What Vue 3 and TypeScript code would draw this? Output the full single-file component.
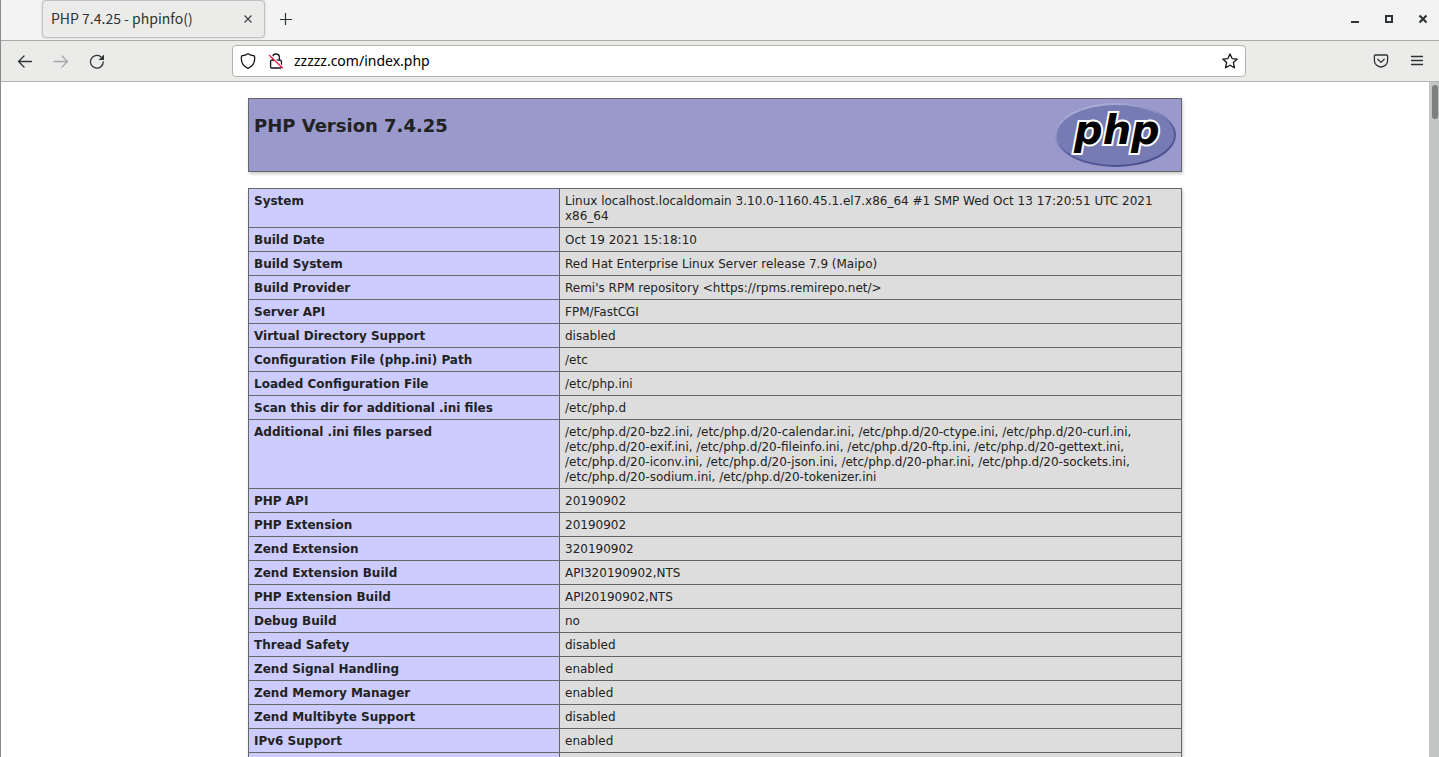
<script setup lang="ts">
import { ref } from 'vue'

interface InfoRow {
  name: string
  value: string
}

const address = ref('zzzzz.com/index.php')

const rows: InfoRow[] = [
  { name: 'System', value: 'Linux localhost.localdomain 3.10.0-1160.45.1.el7.x86_64 #1 SMP Wed Oct 13 17:20:51 UTC 2021 x86_64' },
  { name: 'Build Date', value: 'Oct 19 2021 15:18:10' },
  { name: 'Build System', value: 'Red Hat Enterprise Linux Server release 7.9 (Maipo)' },
  { name: 'Build Provider', value: "Remi's RPM repository <https://rpms.remirepo.net/>" },
  { name: 'Server API', value: 'FPM/FastCGI' },
  { name: 'Virtual Directory Support', value: 'disabled' },
  { name: 'Configuration File (php.ini) Path', value: '/etc' },
  { name: 'Loaded Configuration File', value: '/etc/php.ini' },
  { name: 'Scan this dir for additional .ini files', value: '/etc/php.d' },
  {
    name: 'Additional .ini files parsed',
    value: [
      '/etc/php.d/20-bz2.ini, /etc/php.d/20-calendar.ini, /etc/php.d/20-ctype.ini, /etc/php.d/20-curl.ini,',
      '/etc/php.d/20-exif.ini, /etc/php.d/20-fileinfo.ini, /etc/php.d/20-ftp.ini, /etc/php.d/20-gettext.ini,',
      '/etc/php.d/20-iconv.ini, /etc/php.d/20-json.ini, /etc/php.d/20-phar.ini, /etc/php.d/20-sockets.ini,',
      '/etc/php.d/20-sodium.ini, /etc/php.d/20-tokenizer.ini',
    ].join('\n'),
  },
  { name: 'PHP API', value: '20190902' },
  { name: 'PHP Extension', value: '20190902' },
  { name: 'Zend Extension', value: '320190902' },
  { name: 'Zend Extension Build', value: 'API320190902,NTS' },
  { name: 'PHP Extension Build', value: 'API20190902,NTS' },
  { name: 'Debug Build', value: 'no' },
  { name: 'Thread Safety', value: 'disabled' },
  { name: 'Zend Signal Handling', value: 'enabled' },
  { name: 'Zend Memory Manager', value: 'enabled' },
  { name: 'Zend Multibyte Support', value: 'disabled' },
  { name: 'IPv6 Support', value: 'enabled' },
  { name: '', value: '' },
]
</script>

<template>
  <div class="window">
    <header class="titlebar">
      <div class="tab">
        <span class="tab-title">PHP 7.4.25 - phpinfo()</span>
        <button class="icon-button tab-close" aria-label="Close tab">
          <svg width="10" height="10" viewBox="0 0 10 10"><path d="M1.5 1.5l7 7M8.5 1.5l-7 7" stroke="#3a4042" stroke-width="1.1" fill="none" /></svg>
        </button>
      </div>
      <button class="icon-button new-tab" aria-label="New tab">
        <svg width="12" height="12" viewBox="0 0 12 12"><path d="M5.500 0v12M0 6.500h12" stroke="#2e3436" stroke-width="1.2" fill="none" /></svg>
      </button>
      <div class="window-controls">
        <button class="icon-button" aria-label="Minimize">
          <svg width="10" height="10" viewBox="0 0 10 10"><path d="M1 7h8v2H1z" fill="#2e3436" /></svg>
        </button>
        <button class="icon-button" aria-label="Maximize">
          <svg width="10" height="10" viewBox="0 0 10 10"><path d="M2 2h6v6H2z" fill="none" stroke="#2e3436" stroke-width="2" /></svg>
        </button>
        <button class="icon-button" aria-label="Close window">
          <svg width="10" height="10" viewBox="0 0 10 10"><path d="M1.5 1.5l7 7M8.5 1.5l-7 7" stroke="#2e3436" stroke-width="2.2" fill="none" /></svg>
        </button>
      </div>
    </header>

    <nav class="toolbar">
      <div class="nav-buttons">
        <button class="icon-button" aria-label="Back">
          <svg width="16" height="16" viewBox="0 0 16 16"><path d="M14.500 8.500H1.500M7 3L1.500 8.500L7 14" fill="none" stroke="#2e3436" stroke-width="1.3" stroke-linecap="round" stroke-linejoin="round" /></svg>
        </button>
        <button class="icon-button" aria-label="Forward" disabled>
          <svg width="16" height="16" viewBox="0 0 16 16"><path d="M1 8.500h13.5M9 3L14.500 8.500L9 14" fill="none" stroke="#a3a6a6" stroke-width="1.3" stroke-linecap="round" stroke-linejoin="round" /></svg>
        </button>
        <button class="icon-button" aria-label="Reload">
          <svg width="16" height="16" viewBox="0 0 16 16">
            <path d="M14.300 9A6.400 6.400 0 1 1 11.800 3.700" fill="none" stroke="#2e3436" stroke-width="1.300" stroke-linecap="round" />
            <path d="M15 1.500v5.500H9.500z" fill="#2e3436" />
          </svg>
        </button>
      </div>
      <div class="url-bar">
        <svg class="shield" width="16" height="16" viewBox="0 0 16 16"><path d="M8 .8C6.300 2 4 2.700 1.600 2.900C.6 8.500 2.600 13 8 15.300C13.400 13 15.400 8.500 14.400 2.900C12 2.700 9.700 2 8 .8z" fill="none" stroke="#15141a" stroke-width="1.300" stroke-linejoin="round" /></svg>
        <svg class="lock" width="16" height="16" viewBox="0 0 16 16">
          <path d="M4.600 7.200V4.400a3.400 3.400 0 0 1 6.800 0v2.800" fill="none" stroke="#15141a" stroke-width="1.300" />
          <rect x="2.600" y="7.200" width="10.800" height="7.800" rx="1" fill="none" stroke="#15141a" stroke-width="1.300" />
          <path d="M2 1.200l13.300 13.300" stroke="#fff" stroke-width="1.500" />
          <path d="M1 2l13.800 13.200" stroke="#f0224e" stroke-width="1.300" />
        </svg>
        <input v-model="address" class="url-input" type="text" aria-label="Address" spellcheck="false" />
        <button class="icon-button" aria-label="Bookmark this page">
          <svg width="16" height="16" viewBox="0 0 16 16"><path d="M8 .9l2.100 4.700 5.100.500-3.800 3.500 1.100 5.200L8 12.200l-4.500 2.600 1.100-5.200L.8 6.100l5.100-.500z" fill="none" stroke="#15141a" stroke-width="1.300" stroke-linejoin="round" /></svg>
        </button>
      </div>
      <div class="tool-buttons">
        <button class="icon-button" aria-label="Save to Pocket">
          <svg width="16" height="16" viewBox="0 0 16 16">
            <path d="M2.500 2h11A1.100 1.100 0 0 1 14.600 3.100v4.300a6.600 6.600 0 0 1-13.200 0V3.100A1.100 1.100 0 0 1 2.500 2z" fill="none" stroke="#2e3436" stroke-width="1.300" />
            <path d="M4.800 6.300L8 9.400l3.200-3.100" fill="none" stroke="#2e3436" stroke-width="1.300" stroke-linecap="round" stroke-linejoin="round" />
          </svg>
        </button>
        <button class="icon-button" aria-label="Open menu">
          <svg width="16" height="16" viewBox="0 0 16 16"><path d="M2.500 3.500h11M2.500 7.500h11M2.500 11.500h11" stroke="#2e3436" stroke-width="1.300" stroke-linecap="round" /></svg>
        </button>
      </div>
    </nav>

    <div class="viewport">
      <main class="page">
        <section class="banner">
          <h1>PHP Version 7.4.25</h1>
          <svg class="logo" width="121" height="64" viewBox="0 0 121 64" role="img" aria-label="PHP logo">
            <defs>
              <linearGradient id="rim" x1="0.200" y1="0" x2="0.700" y2="1">
                <stop offset="0" stop-color="#b4b6dc" />
                <stop offset="0.300" stop-color="#9496c8" />
                <stop offset="0.600" stop-color="#5c5fa0" />
                <stop offset="1" stop-color="#484a8c" />
              </linearGradient>
            </defs>
            <ellipse cx="60.500" cy="32" rx="60.500" ry="32" fill="url(#rim)" />
            <ellipse cx="60.500" cy="32" rx="58.500" ry="30" fill="#777bb3" />
            <text class="logo-outline" x="19" y="41">php</text>
            <text class="logo-text" x="19" y="41">php</text>
          </svg>
        </section>
        <table class="info">
          <tbody>
            <tr v-for="(row, index) in rows" :key="index">
              <th scope="row">{{ row.name }}</th>
              <td>{{ row.value }}</td>
            </tr>
          </tbody>
        </table>
      </main>
      <div class="scrollbar"><div class="thumb"></div></div>
    </div>
  </div>
</template>

<style>
body {
  background: #fff;
}
</style>

<style scoped>
.window {
  box-sizing: border-box;
  display: flex;
  flex-direction: column;
  height: 100vh;
  overflow: hidden;
  border-left: 1px solid #8a8c8c;
  background: #fff;
  font-family: "Noto Sans", sans-serif;
}

.icon-button {
  display: flex;
  align-items: center;
  justify-content: center;
  flex: none;
  padding: 0;
  border: 0;
  background: none;
}

.titlebar {
  box-sizing: border-box;
  display: flex;
  flex: none;
  height: 41px;
  padding: 0 11px 0 41px;
  border-bottom: 1px solid #a9aaa9;
  background: #f3f3f3;
}

.tab {
  box-sizing: border-box;
  display: flex;
  align-items: center;
  justify-content: space-between;
  width: 223px;
  height: 38px;
  padding: 0 11px 0 8px;
  border: 1px solid #c0c0c8;
  border-radius: 4px;
  background: #ebebea;
  box-shadow: 0 0 2px rgba(0, 0, 0, 0.2);
}

.tab-title {
  padding-bottom: 2px;
  color: #2e3436;
  font-family: "Noto Sans CJK SC", sans-serif;
  font-size: 14px;
  line-height: 20px;
}

.new-tab {
  width: 42px;
  height: 38px;
}

.window-controls {
  display: flex;
  align-items: center;
  gap: 24px;
  height: 38px;
  margin-left: auto;
}

.toolbar {
  box-sizing: border-box;
  display: flex;
  flex: none;
  align-items: center;
  height: 41px;
  padding: 0 14px 0 16px;
  border-bottom: 1px solid #b3b3b2;
  background: #ebebea;
}

.nav-buttons,
.tool-buttons {
  display: flex;
  gap: 20px;
}

.url-bar {
  box-sizing: border-box;
  display: flex;
  flex: 1;
  align-items: center;
  min-width: 0;
  height: 32px;
  margin: 0 127px;
  padding: 0 7px;
  border: 1px solid #b3b3ae;
  border-radius: 4px;
  background: #fff;
}

.url-bar svg {
  flex: none;
}

.lock {
  margin: 0 10px 0 12px;
}

.url-input {
  flex: 1;
  min-width: 0;
  padding: 0;
  border: 0;
  outline: 0;
  background: none;
  color: #000;
  font-family: "Noto Sans", sans-serif;
  font-size: 14px;
  line-height: 20px;
}

.viewport {
  display: flex;
  flex: 1;
  min-height: 0;
}

.page {
  flex: 1;
  padding: 16px 0;
  overflow: hidden;
  color: #222;
  font-family: "DejaVu Sans", sans-serif;
}

.banner,
.info {
  box-sizing: border-box;
  width: 934px;
  max-width: 100%;
  margin: 0 auto 16px;
  box-shadow: 1px 2px 3px #ccc;
}

.banner {
  display: flex;
  justify-content: space-between;
  padding: 4px 5px;
  border: 1px solid #666;
  background: #99c;
}

h1 {
  margin: 12px 0 0;
  font-size: 18px;
  line-height: 21px;
}

.logo-outline,
.logo-text {
  font-family: "DejaVu Sans", sans-serif;
  font-size: 40px;
  font-style: italic;
  font-weight: bold;
  stroke-linejoin: miter;
}

.logo-outline {
  fill: #fff;
  stroke: #fff;
  stroke-width: 4px;
}

.logo-text {
  fill: #000;
}

.info {
  border-collapse: collapse;
}

.info th,
.info td {
  height: 15px;
  padding: 5px 5px 3px;
  border: 1px solid #666;
  font-size: 12px;
  line-height: 15px;
  text-align: left;
  vertical-align: baseline;
}

.info th {
  width: 300px;
  background: #ccf;
  font-weight: bold;
}

.info td {
  background: #ddd;
  white-space: pre-line;
}

.scrollbar {
  box-sizing: border-box;
  flex: none;
  width: 10px;
  padding: 3px 1px 3px 3px;
  background: #c3c5c4;
}

.thumb {
  height: 34px;
  border-radius: 3px;
  background: #7b7f7f;
}
</style>
